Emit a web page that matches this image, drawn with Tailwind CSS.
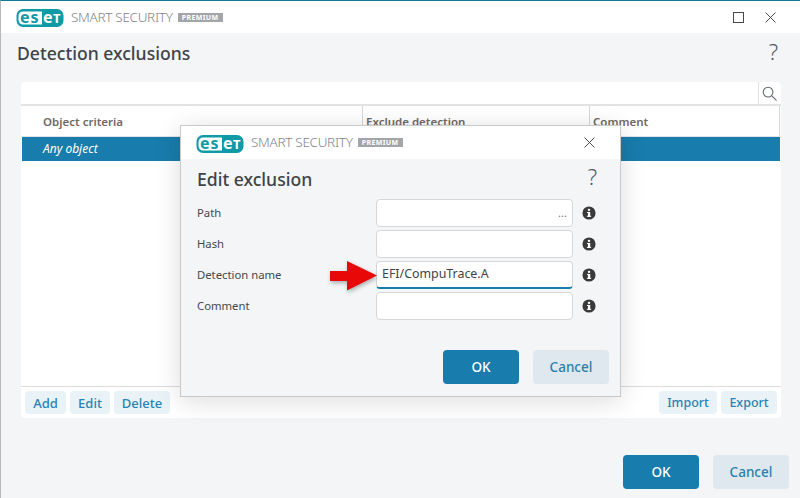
<!DOCTYPE html>
<html lang="en">
<head>
  <meta charset="UTF-8">
  <title>Detection exclusions</title>
  <script src="https://cdn.jsdelivr.net/npm/@tailwindcss/browser@4"></script>
</head>
<body class="w-[800px] h-[498px] overflow-hidden bg-[#f3f5f7] font-['Noto_Sans',sans-serif] text-[#3f3f46]">
  <div class="relative w-[800px] h-[498px] border-t border-l border-t-[#0f7c90] border-l-[#b8b8b8] flex flex-col">

    <!-- title bar -->
    <header class="h-[32px] bg-white flex items-center pl-[15px] pr-[24px] shrink-0">
      <svg viewBox="0 0 48 20" class="w-[48px] h-[20px]">
        <rect x="0.5" y="2" width="47" height="18" rx="6.5" fill="#0f9aa5"/>
        <path d="M7 4.5h19v13H7a4.5 4.5 0 0 1-4.5-4.5V9A4.5 4.5 0 0 1 7 4.5z" fill="#fff"/>
        <text x="4" y="15.5" font-family="Noto Sans" font-weight="700" font-size="16" fill="#0f9aa5">e</text>
        <text x="14.5" y="15.5" font-family="Noto Sans" font-weight="700" font-size="16" fill="#0f9aa5">s</text>
        <text x="27" y="15.5" font-family="Noto Sans" font-weight="700" font-size="16" fill="#fff">e</text>
        <text x="37" y="15.5" font-family="Noto Sans" font-weight="700" font-size="13" fill="#fff">T</text>
      </svg>
      <span class="ml-[7px] text-[13.5px] font-light text-[#7f8488] tracking-[-0.3px]">SMART SECURITY</span>
      <span class="ml-[5px] bg-[#a2a6a9] text-white text-[7px] font-bold leading-[9px] px-[4px] tracking-[0.4px]">PREMIUM</span>
      <svg viewBox="0 0 11 11" class="w-[11px] h-[11px] ml-auto" fill="none" stroke="#4a4a4a"><rect x="0.5" y="0.5" width="10" height="10"/></svg>
      <svg viewBox="0 0 11 11" class="w-[11px] h-[11px] ml-[21px]" fill="none" stroke="#4a4a4a"><path d="M0.5 0.5l10 10M10.5 0.5l-10 10"/></svg>
    </header>

    <!-- page heading -->
    <div class="h-[41px] mb-[8px] pl-[16px] pr-[22px] flex items-center justify-between shrink-0">
      <h1 class="text-[17.6px] font-medium text-[#3f4347]">Detection exclusions</h1>
      <span class="text-[22px] font-light text-[#555a5f] pb-[4px]">?</span>
    </div>

    <!-- exclusions table card -->
    <section class="ml-[20px] w-[760px] h-[336px] bg-white rounded-[4px] flex flex-col shrink-0">
      <div class="h-[22px] flex justify-end shrink-0">
        <div class="w-[23px] border-l border-[#e2e2e2] pr-[1px] flex items-center justify-center">
          <svg viewBox="0 0 16 16" class="w-[15px] h-[15px]" fill="none" stroke="#5f6468" stroke-width="1.1"><circle cx="6.5" cy="6.5" r="5.2"/><path d="M10.5 10.5l5 5"/></svg>
        </div>
      </div>
      <div class="h-[33px] border-t-2 border-b border-[#e1e3e4] grid grid-cols-[342px_227px_190px] text-[11.5px] font-semibold text-[#6f6a66] shrink-0">
        <div class="pl-[22px] pt-px flex items-center border-r border-[#d8d8d8]">Object criteria</div>
        <div class="pl-[3px] pt-px flex items-center border-r border-[#d8d8d8]">Exclude detection</div>
        <div class="pl-[3px] pt-px flex items-center border-r border-[#d8d8d8]">Comment</div>
      </div>
      <div class="h-[24px] mx-px bg-[#187cac] text-white text-[12px] italic pl-[21px] flex items-center shrink-0">Any object</div>
      <div class="flex-1"></div>
      <div class="h-[32px] border-t border-[#dcdcdc] px-[4px] pt-[4px] flex justify-between text-[13px] font-medium text-[#2a83b5] shrink-0">
        <div class="flex gap-[4px]">
          <button class="h-[23px] w-[41px] pt-[2px] rounded-[4px] bg-[#e9f2f7]">Add</button>
          <button class="h-[23px] w-[40px] pt-[2px] rounded-[4px] bg-[#e9f2f7]">Edit</button>
          <button class="h-[23px] w-[56px] pt-[2px] rounded-[4px] bg-[#e9f2f7]">Delete</button>
        </div>
        <div class="flex gap-[4px] text-[12.5px]">
          <button class="h-[23px] w-[58px] pt-[2px] rounded-[4px] bg-[#e9f2f7]">Import</button>
          <button class="h-[23px] w-[56px] pt-[2px] rounded-[4px] bg-[#e9f2f7]">Export</button>
        </div>
      </div>
    </section>

    <!-- window buttons -->
    <footer class="flex justify-end gap-[14px] pr-[11px] pt-[37px]">
      <button class="w-[76px] h-[34px] rounded-[4px] bg-[#187cac] text-white text-[13.5px] font-medium">OK</button>
      <button class="w-[76px] h-[34px] rounded-[4px] bg-[#dfe8ee] text-[#2a7fac] text-[13.5px] font-medium">Cancel</button>
    </footer>

    <!-- edit exclusion dialog -->
    <div class="absolute left-[179px] top-[124px] w-[441px] h-[272px] bg-[#f3f5f7] border border-[#c9c9c9] shadow-[0_4px_24px_rgba(0,0,0,0.14)] flex flex-col">
      <div class="h-[33px] bg-white flex items-center pl-[15px] pr-[25px] shrink-0">
        <svg viewBox="0 0 48 20" class="w-[48px] h-[20px]">
          <rect x="0.5" y="2" width="47" height="18" rx="6.5" fill="#0f9aa5"/>
          <path d="M7 4.5h19v13H7a4.5 4.5 0 0 1-4.5-4.5V9A4.5 4.5 0 0 1 7 4.5z" fill="#fff"/>
          <text x="4" y="15.5" font-family="Noto Sans" font-weight="700" font-size="16" fill="#0f9aa5">e</text>
          <text x="14.5" y="15.5" font-family="Noto Sans" font-weight="700" font-size="16" fill="#0f9aa5">s</text>
          <text x="27" y="15.5" font-family="Noto Sans" font-weight="700" font-size="16" fill="#fff">e</text>
          <text x="37" y="15.5" font-family="Noto Sans" font-weight="700" font-size="13" fill="#fff">T</text>
        </svg>
        <span class="ml-[7px] text-[13.5px] font-light text-[#7f8488] tracking-[-0.3px]">SMART SECURITY</span>
        <span class="ml-[5px] bg-[#a2a6a9] text-white text-[7px] font-bold leading-[9px] px-[4px] tracking-[0.4px]">PREMIUM</span>
        <svg viewBox="0 0 11 11" class="w-[11px] h-[11px] ml-auto" fill="none" stroke="#4a4a4a"><path d="M0.5 0.5l10 10M10.5 0.5l-10 10"/></svg>
      </div>
      <div class="h-[40px] pl-[16px] pr-[23px] flex items-center justify-between shrink-0">
        <h2 class="text-[17.6px] font-medium text-[#3f4347]">Edit exclusion</h2>
        <span class="text-[22px] font-light text-[#555a5f] pb-[5px]">?</span>
      </div>
      <div class="pl-[16px] flex flex-col gap-[3px] text-[11.3px] text-[#45494d]">
        <div class="flex items-center h-[28px]">
          <span class="w-[179px]">Path</span>
          <div class="w-[197px] h-[28px] bg-white border border-[#d5d7d9] rounded-[4px] flex items-center justify-end pr-[5px] text-[#777]">...</div>
          <svg viewBox="0 0 16 16" class="w-[14px] h-[14px] ml-[9px]"><circle cx="8" cy="8" r="7.5" fill="#3a3a3a"/><rect x="6.8" y="6.8" width="2.6" height="5.4" fill="#fff"/><rect x="5.8" y="6.8" width="2" height="1.2" fill="#fff"/><rect x="5.6" y="11.2" width="4.8" height="1.2" fill="#fff"/><circle cx="8" cy="4.4" r="1.4" fill="#fff"/></svg>
        </div>
        <div class="flex items-center h-[28px]">
          <span class="w-[179px] pt-px">Hash</span>
          <div class="w-[197px] h-[28px] bg-white border border-[#d5d7d9] rounded-[4px]"></div>
          <svg viewBox="0 0 16 16" class="w-[14px] h-[14px] ml-[9px]"><circle cx="8" cy="8" r="7.5" fill="#3a3a3a"/><rect x="6.8" y="6.8" width="2.6" height="5.4" fill="#fff"/><rect x="5.8" y="6.8" width="2" height="1.2" fill="#fff"/><rect x="5.6" y="11.2" width="4.8" height="1.2" fill="#fff"/><circle cx="8" cy="4.4" r="1.4" fill="#fff"/></svg>
        </div>
        <div class="flex items-center h-[28px]">
          <span class="w-[179px] pt-px">Detection name</span>
          <div class="w-[197px] h-[28px] bg-white border border-[#d5d7d9] border-b-2 border-b-[#187cac] rounded-[4px] flex items-center pl-[5px] text-[12.4px] text-[#3f4347]">EFI/CompuTrace.A</div>
          <svg viewBox="0 0 16 16" class="w-[14px] h-[14px] ml-[9px]"><circle cx="8" cy="8" r="7.5" fill="#3a3a3a"/><rect x="6.8" y="6.8" width="2.6" height="5.4" fill="#fff"/><rect x="5.8" y="6.8" width="2" height="1.2" fill="#fff"/><rect x="5.6" y="11.2" width="4.8" height="1.2" fill="#fff"/><circle cx="8" cy="4.4" r="1.4" fill="#fff"/></svg>
        </div>
        <div class="flex items-center h-[28px]">
          <span class="w-[179px] pt-px">Comment</span>
          <div class="w-[197px] h-[28px] bg-white border border-[#d5d7d9] rounded-[4px]"></div>
          <svg viewBox="0 0 16 16" class="w-[14px] h-[14px] ml-[9px]"><circle cx="8" cy="8" r="7.5" fill="#3a3a3a"/><rect x="6.8" y="6.8" width="2.6" height="5.4" fill="#fff"/><rect x="5.8" y="6.8" width="2" height="1.2" fill="#fff"/><rect x="5.6" y="11.2" width="4.8" height="1.2" fill="#fff"/><circle cx="8" cy="4.4" r="1.4" fill="#fff"/></svg>
        </div>
      </div>
      <div class="flex justify-end gap-[14px] pr-[11px] pt-[30px]">
        <button class="w-[76px] h-[34px] rounded-[4px] bg-[#187cac] text-white text-[13.5px] font-medium">OK</button>
        <button class="w-[76px] h-[34px] rounded-[4px] bg-[#dfe8ee] text-[#2a7fac] text-[13.5px] font-medium">Cancel</button>
      </div>
    </div>

    <!-- red callout arrow -->
    <svg viewBox="0 0 48 32" class="absolute left-[329px] top-[260px] w-[48px] h-[32px] drop-shadow-[1px_2px_2px_rgba(0,0,0,0.3)]"><path d="M0 10h17V0l30 14.5L17 29.5V20H0z" fill="#e80808"/></svg>
  </div>
</body>
</html>
